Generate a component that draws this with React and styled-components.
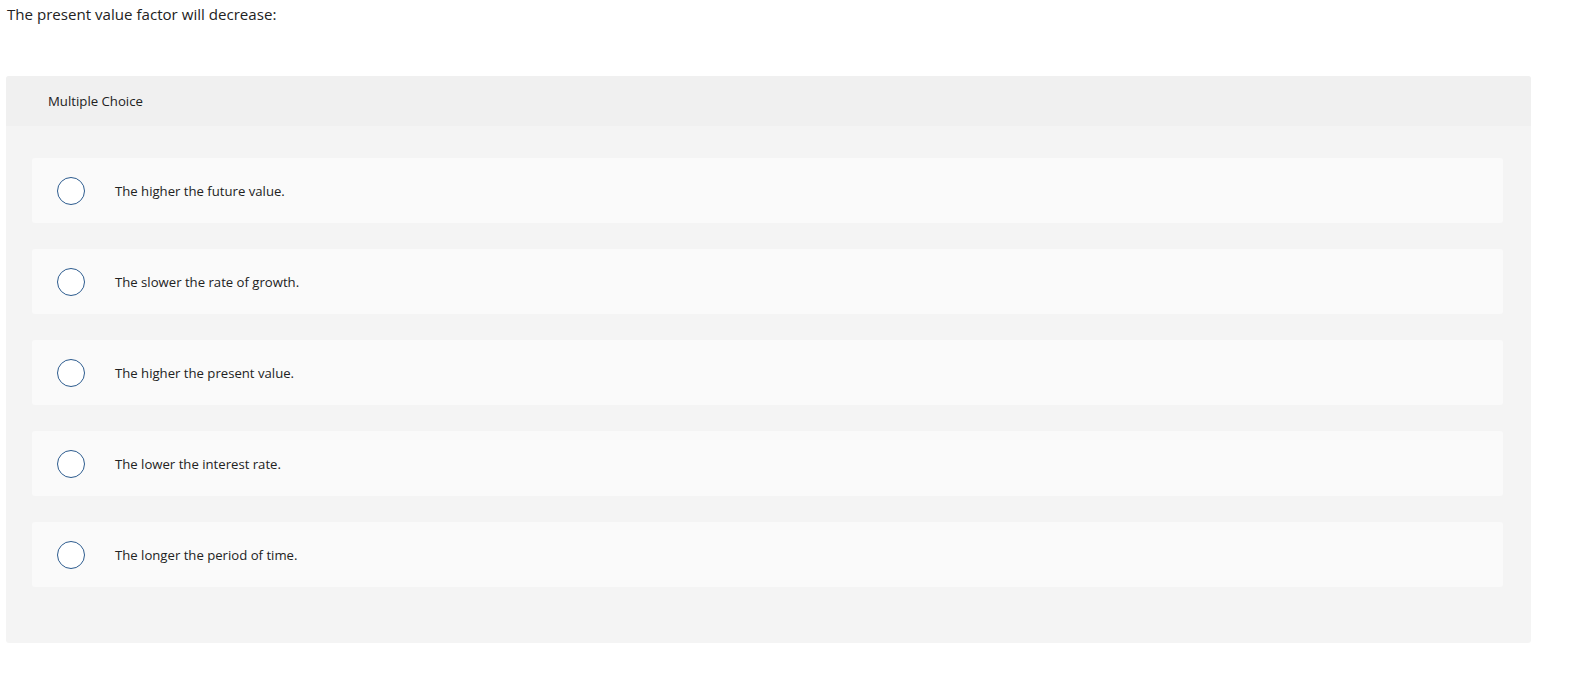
import React from "react";
import styled, { createGlobalStyle } from "styled-components";

const choices = [
  "The higher the future value.",
  "The slower the rate of growth.",
  "The higher the present value.",
  "The lower the interest rate.",
  "The longer the period of time.",
];

function App() {
  return (
    <>
      <GlobalStyle />
      <Page>
        <Prompt>The present value factor will decrease:</Prompt>
        <Panel>
          <PanelHeader>Multiple Choice</PanelHeader>
          <Choices>
            {choices.map((text) => (
              <Choice key={text}>
                <Radio />
                <ChoiceText>{text}</ChoiceText>
              </Choice>
            ))}
          </Choices>
        </Panel>
      </Page>
    </>
  );
}

export default App;

const GlobalStyle = createGlobalStyle`
  body {
    margin: 0;
    background: #fff;
    font-family: "Open Sans", "Liberation Sans", sans-serif;
    color: #222;
  }
`;

const Page = styled.div`
  padding: 4px 60px 0 6px;
`;

const Prompt = styled.p`
  margin: 0 0 0 1px;
  font-size: 15.1px;
  line-height: 20px;
  color: #222;
`;

const Panel = styled.div`
  margin-top: 52px;
  width: 1525px;
  background: #f4f4f4;
  border-radius: 3px;
  overflow: hidden;
`;

const PanelHeader = styled.div`
  height: 50px;
  display: flex;
  align-items: center;
  padding-left: 42px;
  background: #f0f0f0;
  font-size: 13.2px;
  color: #222;
`;

const Choices = styled.div`
  display: flex;
  flex-direction: column;
  gap: 26px;
  padding: 32px 28px 56px 26px;
`;

const Choice = styled.div`
  height: 65px;
  display: flex;
  align-items: center;
  padding-left: 25px;
  background: #fafafa;
  border-radius: 3px;
`;

const Radio = styled.span`
  box-sizing: border-box;
  width: 28px;
  height: 28px;
  flex: none;
  border: 1.5px solid #2c5b8e;
  border-radius: 50%;
  background: #fff;
`;

const ChoiceText = styled.span`
  margin-left: 30px;
  padding-top: 1px;
  font-size: 13.15px;
  color: #222;
`;
